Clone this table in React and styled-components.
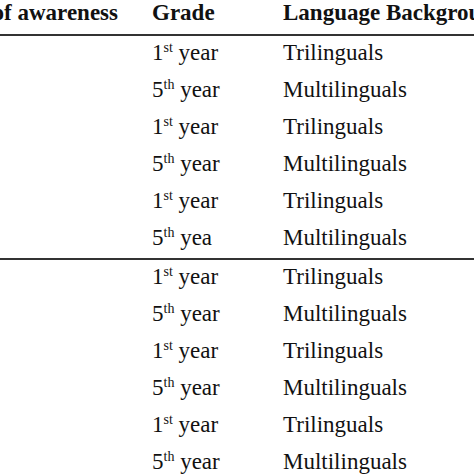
import React from "react"
import styled, { createGlobalStyle } from "styled-components"

const GlobalStyle = createGlobalStyle`
  html, body {
    margin: 0;
    padding: 0;
    background: #ffffff;
  }
  body {
    font-family: "Liberation Serif", "Times New Roman", serif;
    color: #111111;
  }
`

const groups = [
  [
    ["1", "st", "year", "Trilinguals"],
    ["5", "th", "year", "Multilinguals"],
    ["1", "st", "year", "Trilinguals"],
    ["5", "th", "year", "Multilinguals"],
    ["1", "st", "year", "Trilinguals"],
    ["5", "th", "yea", "Multilinguals"],
  ],
  [
    ["1", "st", "year", "Trilinguals"],
    ["5", "th", "year", "Multilinguals"],
    ["1", "st", "year", "Trilinguals"],
    ["5", "th", "year", "Multilinguals"],
    ["1", "st", "year", "Trilinguals"],
    ["5", "th", "year", "Multilinguals"],
  ],
]

const App = () => (
  <>
    <GlobalStyle />
    <Page>
      <HeaderRow>
        <LevelCell>
          <HeadText>Level of awareness</HeadText>
        </LevelCell>
        <HeadText>Grade</HeadText>
        <HeadText>Language Background</HeadText>
      </HeaderRow>
      {groups.map((rows, g) => (
        <Group key={g}>
          {rows.map(([num, suffix, word, lang], i) => (
            <Row key={i}>
              <span />
              <Cell>
                {num}
                <Sup>{suffix}</Sup> {word}
              </Cell>
              <Cell>{lang}</Cell>
            </Row>
          ))}
        </Group>
      ))}
    </Page>
  </>
)

const Page = styled.div`
  width: 474px;
  height: 474px;
  overflow: hidden;
`

const HeaderRow = styled.div`
  display: grid;
  grid-template-columns: 152px 131px 1fr;
  line-height: 26px;
  padding-bottom: 8px;
  border-bottom: 2px solid #333333;
`

const LevelCell = styled.div`
  display: flex;
  justify-content: flex-end;
  padding-right: 34px;
`

const HeadText = styled.span`
  font-size: 23px;
  font-weight: 700;
  white-space: nowrap;
`

const Group = styled.div`
  border-bottom: 2px solid #333333;
`

const Row = styled.div`
  display: grid;
  grid-template-columns: 152px 131px 1fr;
  line-height: 28px;
  padding-top: 3px;
  padding-bottom: 6px;
`

const Cell = styled.span`
  font-size: 23px;
  white-space: nowrap;
`

const Sup = styled.sup`
  font-size: 14px;
  line-height: 0;
  vertical-align: 8px;
`

export default App
